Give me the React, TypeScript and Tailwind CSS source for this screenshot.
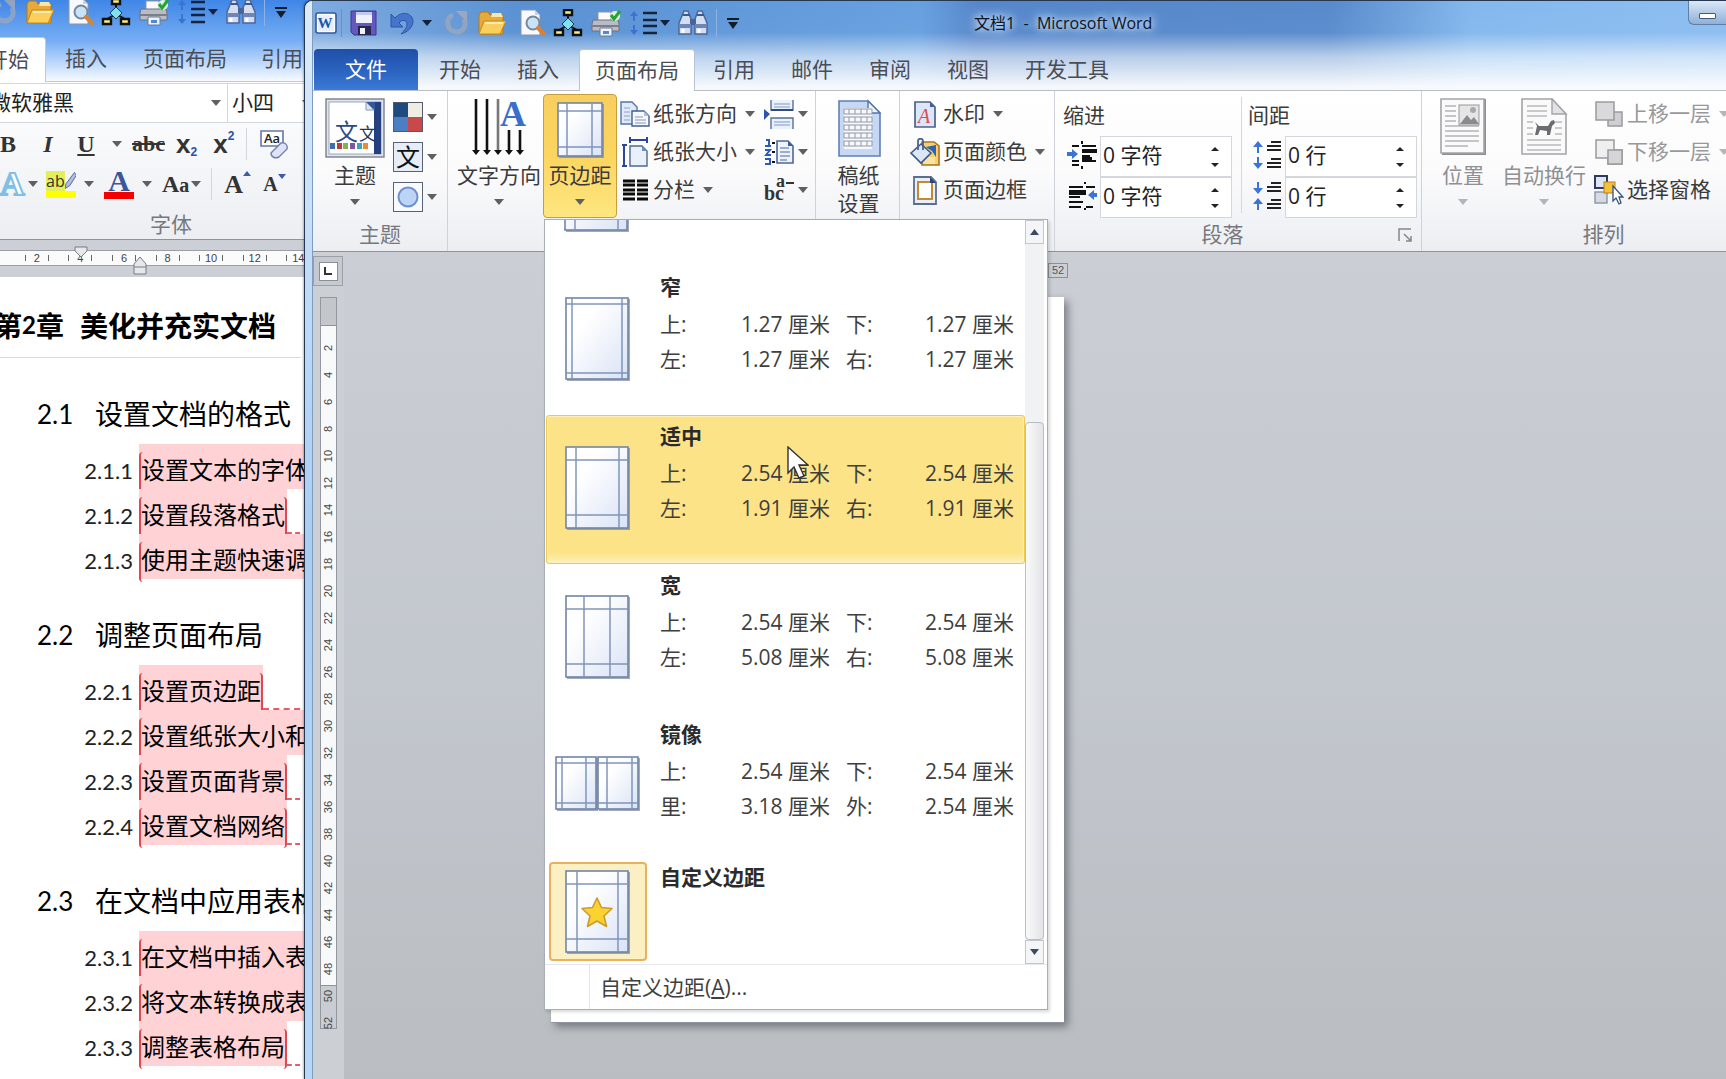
import type { ReactNode } from 'react';
import clsx from 'clsx';

/* ---------- data ---------- */

interface Outline {
  no: string;
  title: string;
  items: { no: string; text: string; open?: boolean }[];
}

const OUTLINE: Outline[] = [
  {
    no: '2.1',
    title: '设置文档的格式',
    items: [
      { no: '2.1.1', text: '设置文本的字体', open: true },
      { no: '2.1.2', text: '设置段落格式' },
      { no: '2.1.3', text: '使用主题快速调', open: true },
    ],
  },
  {
    no: '2.2',
    title: '调整页面布局',
    items: [
      { no: '2.2.1', text: '设置页边距' },
      { no: '2.2.2', text: '设置纸张大小和', open: true },
      { no: '2.2.3', text: '设置页面背景' },
      { no: '2.2.4', text: '设置文档网络' },
    ],
  },
  {
    no: '2.3',
    title: '在文档中应用表格',
    items: [
      { no: '2.3.1', text: '在文档中插入表', open: true },
      { no: '2.3.2', text: '将文本转换成表', open: true },
      { no: '2.3.3', text: '调整表格布局' },
    ],
  },
];

interface Preset {
  name: string;
  rows: [string, string, string, string][];
  // guide positions inside the 64x83 thumbnail
  x: [number, number];
  y: [number, number];
  mirrored?: boolean;
}

const PRESETS: Preset[] = [
  {
    name: '窄',
    rows: [['上:', '1.27', '下:', '1.27'], ['左:', '1.27', '右:', '1.27']],
    x: [7, 57],
    y: [7, 76],
  },
  {
    name: '适中',
    rows: [['上:', '2.54', '下:', '2.54'], ['左:', '1.91', '右:', '1.91']],
    x: [11, 54],
    y: [14, 69],
  },
  {
    name: '宽',
    rows: [['上:', '2.54', '下:', '2.54'], ['左:', '5.08', '右:', '5.08']],
    x: [19, 45],
    y: [14, 69],
  },
  {
    name: '镜像',
    rows: [['上:', '2.54', '下:', '2.54'], ['里:', '3.18', '外:', '2.54']],
    x: [7, 31],
    y: [7, 47],
    mirrored: true,
  },
];

const TABS = ['开始', '插入', '页面布局', '引用', '邮件', '审阅', '视图', '开发工具'];

/* ---------- small drawings ---------- */

function Arrow({ className = 'text-[#5f6062]' }: { className?: string }) {
  return (
    <svg width="10" height="6" viewBox="0 0 10 6" className={clsx('shrink-0', className)}>
      <path d="M0 0h10L5 6z" fill="currentColor" />
    </svg>
  );
}

function RedoIcon() {
  return (
    <svg width="26" height="26" viewBox="0 0 26 26" fill="none">
      <path d="M9 5C1 8 2 21 12 22c8 0 11-7 8-13" stroke="#a3a9b8" strokeWidth="5" />
      <path d="M12 1h11v11z" fill="#b3aeb4" />
    </svg>
  );
}

function UndoIcon() {
  return (
    <svg width="24" height="26" viewBox="0 0 24 26">
      <path d="M1 4v13h12L9 13c3-4 8-3 8 1 0 3-2 6-6 10 7-2 12-7 12-13C22 2 11 1 5 8z" fill="#4575cb" stroke="#2d57a6" />
    </svg>
  );
}

function SaveIcon() {
  return (
    <svg width="28" height="28" viewBox="0 0 28 28">
      <path d="M1 2h25v24H4l-3-3z" fill="#6258bd" stroke="#3e3788" />
      <path d="M6 3h16v11H6z" fill="#eef1fb" />
      <path d="M6 3h16v3H6z" fill="#c3cbea" />
      <path d="M8 17h13v9H8z" fill="#26264e" />
      <path d="M10 19h5v6h-5z" fill="#f1f1f6" />
    </svg>
  );
}

function FolderIcon() {
  return (
    <svg width="29" height="26" viewBox="0 0 29 26">
      <path d="M1 5l2-3h7l2 3h13v19H1z" fill="#e6a93a" stroke="#b87b10" />
      <path d="M14 3h9l2 4H13z" fill="#f9e6a8" />
      <path d="M1 24L6 11h22l-6 13z" fill="#fbcf5c" stroke="#c48a1c" />
      <path d="M7 13h18" stroke="#fdeab0" strokeWidth="2" />
    </svg>
  );
}

function PreviewIcon() {
  return (
    <svg width="28" height="28" viewBox="0 0 28 28">
      <path d="M2 1h14l5 5v20H2z" fill="#f7f9fd" stroke="#8a95ab" />
      <path d="M16 1v5h5z" fill="#c9d2e2" />
      <circle cx="14" cy="14" r="6.5" fill="#c8e4f4" stroke="#75879c" strokeWidth="2" />
      <path d="M19 19l6 6" stroke="#d98232" strokeWidth="4" strokeLinecap="round" />
    </svg>
  );
}

function DiagramIcon() {
  return (
    <svg width="30" height="28" viewBox="0 0 30 28">
      <path d="M15 6v6M15 16l-9 5M15 16l9 5M15 17v4" stroke="#111" strokeWidth="2" />
      <g fill="#f8f27c" stroke="#111" strokeWidth="2.4">
        <path d="M11 1h8v5h-8zM2 21h8v5H2zM20 21h8v5h-8z" />
      </g>
      <path d="M15 9l6 6-6 6-6-6z" fill="#7fe0ee" stroke="#1d3c53" />
    </svg>
  );
}

function PrinterIcon() {
  return (
    <svg width="30" height="28" viewBox="0 0 30 28">
      <path d="M7 3h13v9H7z" fill="#fbfbfd" stroke="#9094a0" />
      <path d="M2 11h25l1 4v7H1v-7z" fill="#b9bcc4" stroke="#6c7080" />
      <path d="M1 16h27v2H1z" fill="#7b7f8c" />
      <path d="M9 19h12v8H9z" fill="#eef4fd" stroke="#6d7a92" />
      <path d="M12 22h6v3h-6z" fill="#4b8ade" />
      <circle cx="24" cy="7" r="5" fill="#dff3d9" />
      <path d="M20 6l3 4 6-8" stroke="#24a336" strokeWidth="3" fill="none" />
    </svg>
  );
}

function SpacingIcon() {
  return (
    <svg width="29" height="26" viewBox="0 0 29 26">
      <path d="M14 3h14M14 10h14M14 16h14M14 23h14" stroke="#15233c" strokeWidth="2.4" />
      <path d="M5 1l4 5H6v5H4V6H1zM5 25l4-5H6v-5H4v5H1z" fill="#3b74d0" />
    </svg>
  );
}

function BinocularsIcon() {
  return (
    <svg width="30" height="26" viewBox="0 0 30 26">
      <path d="M6 1h4l3 8v15H1V13zM20 1h4l5 12v11H17V9z" fill="#d3def1" stroke="#4d6798" strokeWidth="1.5" />
      <path d="M12 9h6v6h-6z" fill="#4a6499" />
      <path d="M1 14h12v4H1zM17 14h12v4H17z" fill="#6d86b5" />
      <path d="M5 5h7M19 5h7" stroke="#3e588c" strokeWidth="2" />
      <path d="M5 19v4M21 19v4" stroke="#fff" strokeWidth="3" />
    </svg>
  );
}

function WordIcon() {
  return (
    <svg width="22" height="22" viewBox="0 0 22 22">
      <rect x="1" y="1" width="20" height="20" rx="2" fill="#fff" stroke="#315a9c" strokeWidth="1.6" />
      <path d="M3 3h12l4 4v12H3z" fill="#e6effb" />
      <text x="10" y="16" textAnchor="middle" fontSize="15" fontWeight="700" fill="#1f57a8" fontFamily="Liberation Serif, serif">
        W
      </text>
    </svg>
  );
}

function CustomizeIcon() {
  return (
    <svg width="12" height="11" viewBox="0 0 12 11">
      <path d="M0 0h12v2H0zM1 4h10L6 11z" fill="#131c2b" />
    </svg>
  );
}

function Sheet({ w, h, x, y, children }: { w: number; h: number; x: number[]; y: number[]; children?: ReactNode }) {
  return (
    <svg width={w + 3} height={h + 3} viewBox={`0 0 ${w + 3} ${h + 3}`} className="shrink-0">
      <defs>
        <linearGradient id="sheet" x1="0" y1="0" x2="1" y2="1">
          <stop offset="0.3" stopColor="#fff" />
          <stop offset="1" stopColor="#d9e2f5" />
        </linearGradient>
      </defs>
      <rect x="2" y="2" width={w} height={h} fill="#76849c" opacity="0.7" />
      <rect x="1" y="1" width={w - 1} height={h - 1} fill="url(#sheet)" stroke="#7285a6" strokeWidth="1.6" />
      {x.map((v) => (
        <path key={`x${v}`} d={`M${v} 1V${h}`} stroke="#7f95bb" strokeWidth="1.5" />
      ))}
      {y.map((v) => (
        <path key={`y${v}`} d={`M1 ${v}H${w}`} stroke="#7f95bb" strokeWidth="1.5" />
      ))}
      {children}
    </svg>
  );
}

function ThemeIcon() {
  return (
    <svg width="60" height="60" viewBox="0 0 60 60">
      <rect x="1" y="1" width="58" height="58" fill="#dfe4ee" stroke="#7b7f8a" strokeWidth="1.4" />
      <rect x="4" y="4" width="52" height="52" fill="#fff" stroke="#9ba5ba" />
      <path d="M49 4h7v52h-7z" fill="#24407f" />
      <path d="M41 4h9v9z" fill="#3559a0" />
      <path d="M41 4v8h8z" fill="#dce6f5" stroke="#8597b8" />
      <text x="10" y="42" fontSize="23" fill="#2a4a86" fontFamily="Noto Sans CJK SC, sans-serif">文</text>
      <text x="34" y="42" fontSize="17" fill="#1c3562" fontFamily="Noto Sans CJK SC, sans-serif">文</text>
      <path d="M5 45h5v6H5z" fill="#3b6fb0" />
      <path d="M12 45h5v6h-5z" fill="#c0393f" />
      <path d="M18 45h5v6h-5z" fill="#8bb045" />
      <path d="M25 45h5v6h-5z" fill="#7a5aa6" />
      <path d="M32 45h5v6h-5z" fill="#3aa5bd" />
      <path d="M38 45h5v6h-5z" fill="#ee8a35" />
    </svg>
  );
}

function ColorsIcon() {
  return (
    <svg width="30" height="30" viewBox="0 0 30 30">
      <path d="M0 0h30v30H0z" fill="#555b66" />
      <path d="M1 1h14v14H1z" fill="#1f4a80" />
      <path d="M15 1h14v14H15z" fill="#efede3" />
      <path d="M1 15h14v14H1z" fill="#4b7ec2" />
      <path d="M15 15h14v14H15z" fill="#c9484a" />
    </svg>
  );
}

function FontsIcon() {
  return (
    <svg width="30" height="30" viewBox="0 0 30 30">
      <rect x="0.5" y="0.5" width="29" height="29" fill="#e6edf7" stroke="#596273" />
      <text x="15" y="24" textAnchor="middle" fontSize="24" fill="#111" fontFamily="Noto Sans CJK SC, sans-serif">文</text>
    </svg>
  );
}

function EffectsIcon() {
  return (
    <svg width="30" height="30" viewBox="0 0 30 30">
      <rect x="0.5" y="0.5" width="29" height="29" fill="#f8fafd" stroke="#596273" />
      <circle cx="15" cy="15" r="9.5" fill="#bcd4f6" stroke="#6f90cc" strokeWidth="2" />
    </svg>
  );
}

function TextDirectionIcon() {
  return (
    <svg width="56" height="58" viewBox="0 0 56 58">
      <path d="M5 1v52M16 1v52M49 32v21M38 32v21" stroke="#111" strokeWidth="2.6" />
      <path d="M27 1v52" stroke="#777" strokeWidth="2.6" />
      <path d="M1 52h8l-4 5zM12 52h8l-4 5zM23 52h8l-4 5zM34 52h8l-4 5zM45 52h8l-4 5z" fill="#111" />
      <text x="42" y="28" textAnchor="middle" fontSize="36" fontWeight="700" fill="#3a6ecb" fontFamily="Liberation Serif, serif">A</text>
    </svg>
  );
}

function OrientationIcon() {
  return (
    <svg width="30" height="28" viewBox="0 0 30 28">
      <path d="M1 2h11l5 5v17H1z" fill="#dfe9f8" stroke="#5573a8" strokeWidth="1.4" />
      <path d="M4 8h6M4 12h6M4 16h6M4 20h6" stroke="#8ba2cb" />
      <path d="M12 11h12l5 5v10H12z" fill="#f5f8fd" stroke="#43608f" strokeWidth="1.4" />
      <path d="M24 11v5h5z" fill="#aebfdd" />
      <path d="M15 17h8M15 20h11M15 23h11" stroke="#8297bd" />
    </svg>
  );
}

function PaperSizeIcon() {
  return (
    <svg width="30" height="30" viewBox="0 0 30 30">
      <path d="M10 3h17M10 0v6M27 0v6M4 8v21M2 8h5M2 29h5" stroke="#2b4798" strokeWidth="2" />
      <path d="M10 9h12l5 5v15H10z" fill="#e9f0fa" stroke="#4c688f" strokeWidth="1.4" />
      <path d="M22 9v5h5z" fill="#6f8fc0" />
    </svg>
  );
}

function ColumnsIcon() {
  return (
    <svg width="28" height="22" viewBox="0 0 28 22">
      <path d="M2 2h12M2 6h12M2 11h12M2 15h12M2 20h12M16 2h11M16 6h11M16 11h11M16 15h11M16 20h11" stroke="#0b0b0b" strokeWidth="2.8" />
    </svg>
  );
}

function BreaksIcon() {
  return (
    <svg width="30" height="29" viewBox="0 0 30 29">
      <path d="M0 9l6 5-6 6z" fill="#2c55b0" />
      <path d="M7 0v10h22V0" fill="#eaf1fb" stroke="#53709e" strokeWidth="1.4" />
      <path d="M7 29V18h22v11" fill="#eaf1fb" stroke="#53709e" strokeWidth="1.4" />
      <path d="M10 4h16M10 7h16M10 22h16M10 25h16" stroke="#8098c4" />
      <path d="M7 10h22" stroke="#2d4b85" strokeWidth="2" />
    </svg>
  );
}

function LineNumbersIcon() {
  return (
    <svg width="30" height="27" viewBox="0 0 30 27">
      <path d="M2 1h3v6M1 7h6M1 11h5l-4 5h5M1 20h5v5H1" stroke="#2f5ab8" strokeWidth="2" fill="none" />
      <path d="M8 4h3M8 13h3M8 23h3" stroke="#111" strokeWidth="2" />
      <path d="M13 2h11l5 5v17H13z" fill="#eef3fb" stroke="#4c6896" strokeWidth="1.6" />
      <path d="M24 2v5h5z" fill="#3b5da0" />
      <path d="M16 9h9M16 13h10M16 17h10M16 21h7" stroke="#8297bd" strokeWidth="1.4" />
    </svg>
  );
}

function HyphenIcon() {
  return (
    <svg width="30" height="24" viewBox="0 0 30 24" fontFamily="Liberation Serif, serif" fontWeight="700" fill="#333">
      <text x="12" y="9" fontSize="18">a</text>
      <path d="M22 4h8v2h-8z" />
      <text x="0" y="22" fontSize="20">bc</text>
    </svg>
  );
}

function GridPaperIcon() {
  return (
    <svg width="44" height="58" viewBox="0 0 44 58">
      <path d="M2 2h29l12 12v43H2z" fill="#c6d8f3" stroke="#6080b4" strokeWidth="1.6" />
      <path d="M31 2v12h12z" fill="#f2f6fc" stroke="#5374ab" strokeWidth="1.4" />
      <rect x="7" y="9" width="28" height="41" fill="#f6f8fc" />
      {[10, 18, 26, 34, 42].map((y) => (
        <g key={y} fill="none" stroke="#9298a6">
          <path d={`M7 ${y}h28v5H7z`} />
          <path d={`M12 ${y}v5M18 ${y}v5M24 ${y}v5M30 ${y}v5`} />
        </g>
      ))}
    </svg>
  );
}

function WatermarkIcon() {
  return (
    <svg width="24" height="27" viewBox="0 0 24 27">
      <path d="M2 1h15l5 5v20H2z" fill="#dbe6f6" stroke="#4c628a" strokeWidth="1.7" />
      <path d="M17 1v5h5z" fill="#3f5f9a" />
      <text x="11" y="22" textAnchor="middle" fontSize="20" fill="#e04c55" fontFamily="Liberation Serif, serif" fontStyle="italic">A</text>
    </svg>
  );
}

function PageColorIcon() {
  return (
    <svg width="30" height="29" viewBox="0 0 30 29">
      <path d="M12 4h12l5 4v19H12z" fill="#f7cf70" stroke="#a8741d" strokeWidth="1.6" />
      <path d="M13 19h12v7H13z" fill="#f9e3a4" />
      <path d="M1 15l10-9 10 9-10 10z" fill="#dce7f6" stroke="#3d5a88" strokeWidth="1.6" />
      <path d="M8 12V3c0-3 5-3 5 0v9" fill="none" stroke="#4a648f" strokeWidth="1.8" />
      <path d="M16 9l10-2v12l-4-6z" fill="#2c62b8" />
    </svg>
  );
}

function PageBorderIcon() {
  return (
    <svg width="26" height="29" viewBox="0 0 26 29">
      <path d="M2 1h17l5 5v22H2z" fill="#e9effa" stroke="#5d6d8d" strokeWidth="1.8" />
      <path d="M6 6h14v17H6z" fill="#fff" stroke="#c28a35" strokeWidth="2" />
      <path d="M18 1v6h6z" fill="#2c4576" />
    </svg>
  );
}

function IndentIcon({ right = false }: { right?: boolean }) {
  return (
    <svg width="30" height="28" viewBox="0 0 30 28">
      {right ? (
        <>
          <path d="M2 5h14M19 5h9M2 15h11M2 20h14M2 25h12M19 25h7" stroke="#111" strokeWidth="2" />
          <path d="M2 8h17v5H2z" fill="#111" />
          <path d="M21 13l6-5v3h3v4h-3v3z" fill="#3b74d6" />
          <path d="M18 0v2M18 26v2" stroke="#111" strokeWidth="2" />
        </>
      ) : (
        <>
          <path d="M5 5h7M15 5h14M15 15h8M15 20h14M5 20h7M5 24h7" stroke="#111" strokeWidth="2" />
          <path d="M15 8h15v4H15zM15 16h10v3H15z" fill="#111" />
          <path d="M11 13L5 8v3H0v4h5v3z" fill="#3b74d6" />
          <path d="M15 0v3M15 25v3" stroke="#111" strokeWidth="2" />
        </>
      )}
    </svg>
  );
}

function ParaSpaceIcon({ after = false }: { after?: boolean }) {
  const up = 'M6 0l5 6H7v6H5V6H1z';
  const down = 'M6 12l5-6H7V0H5v6H1z';
  return (
    <svg width="30" height="30" viewBox="0 0 30 30">
      <path d={after ? down : up} fill="#3b74d6" transform="translate(0 1)" />
      <path d={after ? up : down} fill="#3b74d6" transform="translate(0 17)" />
      <path d="M19 2h10M15 6h14M15 10h14M19 19h10M15 23h14M15 27h14" stroke="#222" strokeWidth="2" />
    </svg>
  );
}

function PositionIcon() {
  return (
    <svg width="47" height="58" viewBox="0 0 47 58">
      <path d="M2 1h44v56H2z" fill="#8f8f93" />
      <path d="M1 1h43v54H1z" fill="#fafafa" stroke="#a4a4a8" strokeWidth="1.6" />
      <path d="M5 8h11M5 13h11M5 18h11M5 23h11M5 28h34M5 33h34M5 38h34M5 43h34M5 48h23" stroke="#b4b4b8" strokeWidth="1.4" />
      <rect x="19" y="7" width="20" height="20" fill="#e5e5e6" stroke="#98989c" />
      <path d="M20 26l7-9 4 5 3-3 5 7z" fill="#8b8b8f" />
      <circle cx="33" cy="12" r="3" fill="#a9a9ad" />
    </svg>
  );
}

function WrapIcon() {
  return (
    <svg width="47" height="58" viewBox="0 0 47 58">
      <path d="M1 1h30l14 15v40H1z" fill="#fafafa" stroke="#a4a4a8" strokeWidth="1.6" />
      <path d="M31 1v15h14z" fill="#e2e2e4" stroke="#a4a4a8" strokeWidth="1.4" />
      <path d="M6 8h20M6 13h20M6 18h20M6 24h6M6 30h6M6 36h6M34 24h7M34 30h7M34 36h7M6 42h34M6 47h34M6 52h34" stroke="#b9b9bd" strokeWidth="1.4" />
      <path d="M14 24l4 4h9l3-5 3-1 1 3-3 3-2 9h-3v-4l-7-1-2 5h-3l2-9z" fill="#6c6c70" />
    </svg>
  );
}

function LayersIcon({ back = false }: { back?: boolean }) {
  return (
    <svg width="28" height="26" viewBox="0 0 28 26" stroke="#9a9a9f" strokeWidth="1.5">
      <rect x="13" y="11" width="14" height="14" fill={back ? '#e3e3e5' : '#cfcfd2'} />
      <rect x="1" y="1" width="18" height="18" fill={back ? '#efeff0' : '#d9d9dc'} />
      {back && <rect x="13" y="11" width="14" height="14" fill="#d5d5d8" />}
    </svg>
  );
}

function SelectionIcon() {
  return (
    <svg width="30" height="30" viewBox="0 0 30 30">
      <rect x="1" y="1" width="12" height="12" fill="#dfe6f2" stroke="#2d3c5e" strokeWidth="2" />
      <rect x="1" y="17" width="12" height="11" fill="#d5dae4" stroke="#8b93a3" strokeWidth="1.4" />
      <rect x="10" y="7" width="11" height="11" fill="#f5c03c" stroke="#b98413" />
      <path d="M19 11v15l3-3 3 6 2-1-2-6h4z" fill="#fff" stroke="#33527e" strokeWidth="1.3" />
    </svg>
  );
}

function ClearFormatIcon() {
  return (
    <svg width="32" height="30" viewBox="0 0 32 30">
      <path d="M2 2h22v15H2z" fill="#fff" stroke="#6676a6" strokeWidth="1.6" />
      <text x="5" y="14" fontSize="13" fontWeight="600" fontFamily="Open Sans, sans-serif" fill="#222">Aa</text>
      <path d="M12 24l10-10c4-1 7 2 6 6l-8 8c-4 2-8 0-8-4z" fill="#dfe3f4" stroke="#7380ae" strokeWidth="1.4" />
    </svg>
  );
}

function MousePointer() {
  return (
    <svg width="22" height="34" viewBox="0 0 22 34">
      <path d="M1 1v26l6-6 5 11 5-2-5-11h9z" fill="#fff" stroke="#333" strokeWidth="1.4" />
    </svg>
  );
}

/* ---------- shared pieces ---------- */

function QuickAccess({ full = false }: { full?: boolean }) {
  return (
    <div className="flex shrink-0 items-center">
      {full && (
        <>
          <button aria-label="Word"><WordIcon /></button>
          <span className="ml-1 h-7 w-px bg-[#6b8fbf]" />
          <button aria-label="保存" className="ml-2"><SaveIcon /></button>
          <button aria-label="撤消" className="ml-3"><UndoIcon /></button>
          <button aria-label="撤消列表" className="ml-2"><Arrow className="text-[#14213a]" /></button>
        </>
      )}
      <button aria-label="恢复" className={clsx('opacity-70', full && 'ml-3')}><RedoIcon /></button>
      <button aria-label="打开" className="ml-2"><FolderIcon /></button>
      <button aria-label="打印预览" className="ml-3"><PreviewIcon /></button>
      <button aria-label="图示" className="ml-1.5"><DiagramIcon /></button>
      <button aria-label="快速打印" className="ml-2"><PrinterIcon /></button>
      <button aria-label="行距" className="ml-2 flex items-center gap-0.5">
        <SpacingIcon />
        <Arrow className="text-[#14213a]" />
      </button>
      <button aria-label="查找" className="ml-2"><BinocularsIcon /></button>
      <span className="ml-2 h-7 w-px bg-[#8fb2e2]" />
      <button aria-label="自定义快速访问工具栏" className="ml-2.5"><CustomizeIcon /></button>
    </div>
  );
}

function SmallButton({ icon, label, arrow, disabled }: { icon: ReactNode; label?: string; arrow?: boolean; disabled?: boolean }) {
  return (
    <button className={clsx('flex h-[38px] items-center', disabled ? 'text-[#97989c]' : 'text-[#3b3b3b]')} disabled={disabled} aria-label={label ?? '更多'}>
      <span className="flex w-[30px] shrink-0 justify-center">{icon}</span>
      {label && <span className="ml-[3px]">{label}</span>}
      {arrow && <span className={label ? 'ml-2' : 'ml-1'}><Arrow className={disabled ? 'text-[#b5b5b9]' : undefined} /></span>}
    </button>
  );
}

function BigButton({ icon, label, className, disabled }: { icon: ReactNode; label: string; className?: string; disabled?: boolean }) {
  return (
    <button disabled={disabled} className={clsx('flex flex-col items-center', disabled ? 'text-[#8f9094]' : 'text-[#3b3b3b]', className)}>
      <span className="flex h-[60px] items-start">{icon}</span>
      <span className="h-9 leading-[34px]">{label}</span>
      <span className="flex h-4 items-center"><Arrow className={disabled ? 'text-[#b5b5b9]' : undefined} /></span>
    </button>
  );
}

function Group({ label, className, children, launcher }: { label?: string; className: string; children: ReactNode; launcher?: boolean }) {
  return (
    <section className={clsx('flex shrink-0 flex-col border-r border-[#cfd2d8]', className)}>
      <div className="flex h-[128px]">{children}</div>
      <div className="flex h-8 items-center justify-center text-[#77787d]">
        {launcher && <span className="ml-auto" />}
        <span className={clsx(launcher && 'pr-2')}>{label}</span>
        {launcher && (
          <button aria-label="段落设置" className="mr-2 ml-auto">
            <svg width="15" height="15" viewBox="0 0 15 15" fill="none" stroke="#85868b" strokeWidth="1.5">
              <path d="M1 13V1h12M6 6l7 7M13 8v5H8" />
            </svg>
          </button>
        )}
      </div>
    </section>
  );
}

function Spinner({ id, icon, label, value }: { id: string; icon: ReactNode; label: string; value: string }) {
  return (
    <div className="flex h-[41px] items-center">
      <label htmlFor={id} aria-label={label} className="flex w-[37px] justify-center pb-1">{icon}</label>
      <div className="flex h-full w-[132px] items-center border border-[#d3d6dc] bg-white">
        <input id={id} defaultValue={value} className="h-full w-[110px] min-w-0 bg-transparent pb-1.5 pl-0.5 text-[#222] outline-none" />
        <div className="flex flex-col gap-3">
          <button aria-label="增加">
            <svg width="8" height="4" viewBox="0 0 8 4" className="block"><path d="M0 4h8L4 0z" fill="#222" /></svg>
          </button>
          <button aria-label="减少">
            <svg width="8" height="4" viewBox="0 0 8 4" className="block"><path d="M0 0h8L4 4z" fill="#222" /></svg>
          </button>
        </div>
      </div>
    </div>
  );
}

/* ---------- document window at the back ---------- */

function FormatRow() {
  return (
    <div className="text-[#333]">
      <div className="flex h-10 items-center">
        <button className="flex h-full w-[228px] shrink-0 items-center justify-between border-y border-r border-[#d3d6dc] bg-white pr-1.5">
          <span className="-ml-2.5 text-[#222]">微软雅黑</span>
          <Arrow />
        </button>
        <button className="flex h-full w-[84px] shrink-0 items-center justify-between border-y border-[#d3d6dc] bg-white pl-1">
          <span className="text-[#222]">小四</span>
          <Arrow />
        </button>
      </div>
      <div className="flex h-[41px] items-center font-['Liberation_Serif',serif] text-[24px]">
        <button className="w-4 font-bold">B</button>
        <button className="ml-6 w-4 italic font-bold">I</button>
        <button className="ml-5 w-5 font-bold underline">U</button>
        <span className="ml-4"><Arrow /></span>
        <button className="ml-2.5 w-8 text-[22px] font-bold line-through">abc</button>
        <button className="ml-3 flex items-end font-bold font-['Liberation_Sans',sans-serif] text-[26px] leading-7">
          x<span className="text-[12px] leading-3 text-[#2c50a8]">2</span>
        </button>
        <button className="ml-4 flex items-start font-bold font-['Liberation_Sans',sans-serif] text-[26px] leading-7">
          x<span className="text-[12px] leading-3 text-[#2c50a8]">2</span>
        </button>
        <span className="ml-3 h-8 w-px bg-[#d3d6dc]" />
        <button aria-label="清除格式" className="ml-3"><ClearFormatIcon /></button>
      </div>
      <div className="flex h-10 items-center font-['Liberation_Serif',serif]">
        <button className="w-[22px] text-[34px] leading-8 font-bold text-white [-webkit-text-stroke:2px_#7fbfe6]">A</button>
        <span className="ml-1.5"><Arrow /></span>
        <button className="ml-2 flex w-[30px] shrink-0 flex-col font-['Open_Sans',sans-serif] text-[16px] leading-5">
          <span className="flex w-full items-center">
            <span className="bg-[#e4ef57]">ab</span>
            <svg width="12" height="20" viewBox="0 0 12 20"><path d="M10 1L1 13l-1 5 5-3 7-11z" fill="#aebde0" stroke="#54659a" /></svg>
          </span>
          <span className="h-[7px] w-full bg-[#ffff00]" />
        </button>
        <span className="ml-2"><Arrow /></span>
        <button className="ml-2.5 flex w-[30px] shrink-0 flex-col items-center text-[30px] leading-[22px] font-bold text-[#3a569c]">
          A
          <span className="h-[7px] w-full bg-[#f50000]" />
        </button>
        <span className="ml-2"><Arrow /></span>
        <button className="ml-2.5 text-[24px] font-bold">A<span className="text-[20px]">a</span></button>
        <span className="ml-0.5"><Arrow /></span>
        <span className="ml-2.5 h-8 w-px bg-[#d3d6dc]" />
        <button className="ml-3 flex text-[26px] font-bold">
          A
          <svg width="8" height="5" viewBox="0 0 8 5" className="mt-1.5"><path d="M0 5h8L4 0z" fill="#3a5ba6" /></svg>
        </button>
        <button className="ml-3 flex items-end text-[20px] font-bold">
          A
          <svg width="8" height="5" viewBox="0 0 8 5" className="mb-5"><path d="M0 0h8L4 5z" fill="#3a5ba6" /></svg>
        </button>
      </div>
    </div>
  );
}

function HorizontalRuler() {
  return (
    <div className="relative h-[37px] shrink-0 bg-[#ccd0d6] pt-2.5">
      <div className="h-4 border-y border-[#9a9ea6] bg-[#fbfbfc]">
        <div className="ml-[15px] flex h-full w-[305px] items-center font-['Liberation_Sans',sans-serif] text-[11px] text-[#444]">
          {[2, 4, 6, 8, 10, 12, 14].map((n) => (
            <span key={n} className="flex flex-1 items-center justify-center">
              <i className="h-1.5 w-px bg-[#666]" />
              <span className="w-[22px] text-center">{n}</span>
              <i className="h-1.5 w-px bg-[#666]" />
            </span>
          ))}
        </div>
      </div>
      {/* indent markers */}
      <svg width="14" height="12" viewBox="0 0 14 12" className="absolute top-1.5 left-[74px]">
        <path d="M1 1h12v4l-6 6-6-6z" fill="#e6e8ec" stroke="#777b84" />
      </svg>
      <svg width="14" height="19" viewBox="0 0 14 19" className="absolute top-4 left-[133px]">
        <path d="M1 8l6-7 6 7v10H1zM1 11h12" fill="#e6e8ec" stroke="#777b84" />
      </svg>
    </div>
  );
}

function OutlineItem({ no, text, open, last }: { no: string; text: string; open?: boolean; last: boolean }) {
  return (
    <li className="flex h-[45px]">
      <span className="w-[139px] shrink-0 pt-2 pr-1.5 text-right leading-[38px] text-[#222] font-['Lato','Noto_Sans_CJK_SC',sans-serif] text-[22px]">
        {no}
      </span>
      <span className={clsx('shrink-0 bg-[#ffd3d6] pt-2', open && 'w-[165px]')}>
        <span
          className={clsx(
            'block border-l-2 border-[#e0474f] leading-[35px] whitespace-nowrap',
            last ? 'h-10 rounded-l-sm' : 'h-[37px] rounded-tl-sm',
            !open && 'border-r-2',
            !open && (last ? 'rounded-r-sm' : 'rounded-tr-sm'),
          )}
        >
          {text}
        </span>
      </span>
      {!open && <span className="mr-1 flex-1 border-b-2 border-dashed border-[#e0606a]" />}
    </li>
  );
}

function BackWindow() {
  return (
    <div className="flex w-[304px] shrink-0 flex-col overflow-hidden bg-white">
      <header className="flex h-[82px] shrink-0 flex-col bg-linear-to-b from-[#3f86e6] via-[#76aef4] to-[#fafcff]">
        <div className="-ml-2 flex h-6 items-center"><QuickAccess /></div>
        <nav className="mt-auto flex h-[45px] items-stretch border-b border-[#c3c8d2] whitespace-nowrap text-[#4a4d55]">
          <button className="-mb-px flex w-[46px] shrink-0 items-center justify-end rounded-tr border-t border-r border-[#c3c8d2] bg-white pr-4">
            <span>开始</span>
          </button>
          <button className="ml-px px-[18px]">插入</button>
          <button className="px-[18px]">页面布局</button>
          <button className="px-4">引用</button>
        </nav>
      </header>
      <section className="flex h-[158px] shrink-0 flex-col border-b border-[#8e9299] bg-linear-to-b from-white to-[#eceef2] pt-px">
        <FormatRow />
        <p className="mt-1 ml-[150px] leading-8 text-[#77787d]">字体</p>
      </section>
      <HorizontalRuler />
      <article className="flex-1 overflow-hidden whitespace-nowrap text-black">
        <h1 className="-ml-1.5 mr-[3px] flex h-[81px] items-center border-b border-[#dcdcdc] pt-4 text-[28px] font-bold">
          <span className="font-['Noto_Sans_CJK_SC',sans-serif]">第</span>
          <span className="font-['Lato',sans-serif] text-[24px]">2</span>
          <span className="font-['Noto_Sans_CJK_SC',sans-serif]">章</span>
          <span className="ml-4 font-['Noto_Sans_CJK_SC',sans-serif]">美化并充实文档</span>
        </h1>
        <div className="pt-7">
          {OUTLINE.map((section) => (
            <section key={section.no} className="mb-7">
              <h2 className="flex h-[58px] items-center pb-0.5 text-[28px]">
                <span className="w-[95px] shrink-0 pl-[37px] font-['Lato',sans-serif] text-[26px]">{section.no}</span>
                {section.title}
              </h2>
              <ul className="text-[24px]">
                {section.items.map((item, i) => (
                  <OutlineItem key={item.no} {...item} last={i === section.items.length - 1} />
                ))}
              </ul>
            </section>
          ))}
        </div>
      </article>
    </div>
  );
}

/* ---------- margins menu ---------- */

function PresetThumb({ x, y, mirrored }: Preset) {
  if (!mirrored) return <Sheet w={63} h={82} x={x} y={y} />;
  return (
    <span className="flex pt-3">
      <Sheet w={41} h={53} x={x} y={y} />
      <span className="-ml-0.5"><Sheet w={41} h={53} x={[10, 35]} y={y} /></span>
    </span>
  );
}

function PresetItem({ preset, active }: { preset: Preset; active: boolean }) {
  return (
    <button
      role="menuitem"
      className={clsx(
        'relative flex h-[149px] w-full rounded-[3px] border text-left',
        active
          ? 'border-[#ecc94f] bg-[#fce387] shadow-[inset_0_0_0_1px_#fdf0bd,inset_0_-8px_8px_-4px_#fdf3c8]'
          : 'border-transparent',
      )}
    >
      <span className="flex w-[98px] shrink-0 justify-center pt-[30px] pl-1">
        <PresetThumb {...preset} />
      </span>
      <span className="ml-[15px] block flex-1">
        <span className="block h-10 pt-1 font-bold leading-8 text-[#2b2b2b]">{preset.name}</span>
        {preset.rows.map(([a, av, b, bv]) => (
          <span key={a} className="grid h-[35px] grid-cols-[48px_122px_56px_128px] leading-[34px]">
            <span>{a}</span>
            <span className="text-right">{av} 厘米</span>
            <span className="pl-4">{b}</span>
            <span className="text-right">{bv} 厘米</span>
          </span>
        ))}
      </span>
      {active && (
        <span className="absolute top-[30px] left-60"><MousePointer /></span>
      )}
    </button>
  );
}

function MarginsMenu() {
  return (
    <div
      role="menu"
      className="absolute top-full left-px z-20 mt-px w-[504px] border border-[#a9adb6] bg-white text-[#3f3f3f] shadow-[2px_2px_3px_rgba(0,0,0,0.15)]"
    >
      <div className="flex h-[745px] border-b border-[#e6e7ea]">
        <div className="w-[480px] pl-px">
          <div className="flex h-[46px] items-start">
            <div className="ml-[18px] flex h-[13px] items-end overflow-hidden">
              <Sheet w={63} h={82} x={[11, 54]} y={[14, 69]} />
            </div>
          </div>
          {PRESETS.map((preset) => (
            <PresetItem key={preset.name} preset={preset} active={preset.name === '适中'} />
          ))}
          <button role="menuitem" className="flex w-full text-left">
            <span className="ml-[3px] flex h-[99px] w-[98px] justify-center rounded border-2 border-[#eab05c] bg-[#fbf0c4] pt-1.5 pr-px">
              <Sheet w={63} h={82} x={[12, 53]} y={[14, 69]}>
                <path
                  d="M32 28l4.500 9.500 10.500 1-8 7.500 2.500 10.500-9.500-5.500-9.500 5.500 2.500-10.500-8-7.500 10.500-1z"
                  fill="#fbd22f"
                  stroke="#cf9a2c"
                  strokeWidth="1.6"
                  strokeLinejoin="round"
                />
              </Sheet>
            </span>
            <span className="ml-[13px] font-bold leading-[30px] text-[#2b2b2b]">自定义边距</span>
          </button>
        </div>
        <div className="flex w-[19px] flex-col bg-[#f1f2f4]">
          <button aria-label="向上滚动" className="flex h-6 items-center justify-center border border-[#c3c6cc] bg-[#f4f5f7]">
            <svg width="9" height="6" viewBox="0 0 9 6"><path d="M0 6h9L4.500 0z" fill="#3f4a66" /></svg>
          </button>
          <div className="h-[178px]" />
          <div className="flex-1 rounded-sm border border-[#b9bcc2] bg-linear-to-r from-[#fafafa] to-[#e3e4e7]" />
          <button aria-label="向下滚动" className="flex h-6 items-center justify-center border border-[#c3c6cc] bg-[#f4f5f7]">
            <svg width="9" height="6" viewBox="0 0 9 6"><path d="M0 0h9L4.500 6z" fill="#3f4a66" /></svg>
          </button>
        </div>
      </div>
      <button role="menuitem" className="flex h-11 w-full items-center pl-11">
        <span className="h-full w-px bg-[#e4e6ea]" />
        <span className="ml-2.5 pt-0.5">
          自定义边距(<u>A</u>)...
        </span>
      </button>
    </div>
  );
}

/* ---------- front window ---------- */

function Ribbon() {
  return (
    <div className="flex h-[161px] shrink-0 border-b border-[#8e9299] bg-linear-to-b from-white via-[#fbfbfc] to-[#eceef2] whitespace-nowrap">
      <Group label="主题" className="w-[135px]">
        <BigButton icon={<ThemeIcon />} label="主题" className="mt-[7px] ml-3 w-[60px]" />
        <div className="mt-[11px] ml-2 flex flex-col gap-2.5">
          {[<ColorsIcon key="c" />, <FontsIcon key="f" />, <EffectsIcon key="e" />].map((icon, i) => (
            <button key={i} aria-label={['颜色', '字体', '效果'][i]} className="flex items-center gap-1">
              {icon}
              <Arrow />
            </button>
          ))}
        </div>
      </Group>
      <Group className="w-[368px]">
        <BigButton icon={<TextDirectionIcon />} label="文字方向" className="mt-[7px] ml-[7px] w-[88px]" />
        <div className="relative h-[127px] w-[74px] pt-[3px]">
          <BigButton
            icon={<span className="pt-1 pl-0.5"><Sheet w={45} h={54} x={[10, 35]} y={[9, 45]} /></span>}
            label="页边距"
            className="h-[124px] w-full rounded border border-[#c79e3c] bg-linear-to-b from-[#f8cf5e] via-[#fbd560] to-[#fee680] pt-[3px]"
          />
          <MarginsMenu />
        </div>
        <div className="mt-1 ml-[3px] w-36">
          <SmallButton icon={<OrientationIcon />} label="纸张方向" arrow />
          <SmallButton icon={<PaperSizeIcon />} label="纸张大小" arrow />
          <SmallButton icon={<ColumnsIcon />} label="分栏" arrow />
        </div>
        <div className="mt-1">
          <SmallButton icon={<BreaksIcon />} arrow />
          <SmallButton icon={<LineNumbersIcon />} arrow />
          <SmallButton icon={<HyphenIcon />} arrow />
        </div>
      </Group>
      <Group className="w-[84px]">
        <button className="mt-2 flex w-full flex-col items-center pl-0.5 text-[#3b3b3b]">
          <span className="h-[62px]"><GridPaperIcon /></span>
          <span className="leading-7">稿纸<br />设置</span>
        </button>
      </Group>
      <Group className="w-[155px]">
        <div className="mt-1 ml-2.5">
          <SmallButton icon={<WatermarkIcon />} label="水印" arrow />
          <SmallButton icon={<PageColorIcon />} label="页面颜色" arrow />
          <SmallButton icon={<PageBorderIcon />} label="页面边框" />
        </div>
      </Group>
      <Group label="段落" className="w-[367px]" launcher>
        <div className="ml-2 w-[178px] text-[#3b3b3b]">
          <p className="h-[45px] leading-[49px]">缩进</p>
          <Spinner id="indent-left" icon={<IndentIcon />} label="左缩进" value="0 字符" />
          <Spinner id="indent-right" icon={<IndentIcon right />} label="右缩进" value="0 字符" />
        </div>
        <span className="mt-1.5 h-[116px] w-px bg-[#d5d8de]" />
        <div className="ml-1.5 text-[#3b3b3b]">
          <p className="h-[45px] leading-[49px]">间距</p>
          <Spinner id="space-before" icon={<ParaSpaceIcon />} label="段前间距" value="0 行" />
          <Spinner id="space-after" icon={<ParaSpaceIcon after />} label="段后间距" value="0 行" />
        </div>
      </Group>
      <Group label="排列" className="w-[364px]">
        <BigButton disabled icon={<PositionIcon />} label="位置" className="mt-[7px] ml-2.5 w-[62px]" />
        <BigButton disabled icon={<WrapIcon />} label="自动换行" className="mt-[7px] ml-1.5 w-[88px]" />
        <div className="mt-1 ml-1.5">
          <SmallButton disabled icon={<LayersIcon />} label="上移一层" arrow />
          <SmallButton disabled icon={<LayersIcon back />} label="下移一层" arrow />
          <SmallButton icon={<SelectionIcon />} label="选择窗格" />
        </div>
      </Group>
    </div>
  );
}

function Workspace() {
  const marks = Array.from({ length: 26 }, (_, i) => (i + 1) * 2);
  return (
    <div className="flex flex-1 overflow-hidden bg-linear-to-b from-[#cbced4] via-[#c3c7ce] to-[#babec2]">
      <div className="w-[31px] shrink-0 bg-[#ccd0d5] pt-1">
        <button aria-label="制表符" className="flex size-[30px] items-center justify-center border border-[#9b9fa7] bg-[#c6cad0]">
          <span className="flex size-[19px] items-center justify-center border border-[#8a8e96] bg-white">
            <i className="size-2 border-b-2 border-l-2 border-[#333]" />
          </span>
        </button>
        <div className="mt-[11px] ml-[7px] flex h-[732px] w-[17px] flex-col border border-[#93979f] bg-[linear-gradient(to_bottom,#c3c7cc_0,#c3c7cc_27px,#8e9299_27px,#8e9299_28px,#f8f9fb_28px,#f8f9fb_687px,#8e9299_687px,#8e9299_688px,#c9cdd3_688px)] pt-9 font-['Liberation_Sans',sans-serif] text-[11px] text-[#444]">
          {marks.map((n) => (
            <span key={n} className="flex h-[27px] shrink-0 items-center justify-center">
              <span className="-rotate-90 leading-3">{n}</span>
            </span>
          ))}
        </div>
      </div>
      <div className="flex-1 overflow-hidden">
        <div className="flex h-[45px] items-start pt-[11px]">
          <span className="ml-[704px] border border-[#8b8f97] bg-[#ccd0d6] px-[3px] leading-[13px] font-['Liberation_Sans',sans-serif] text-[11px] text-[#555]">
            52
          </span>
        </div>
        <div className="ml-[207px] h-[726px] w-[513px] border-b border-[#8f92a0] bg-white shadow-[4px_4px_8px_rgba(60,64,72,0.55)]" />
      </div>
    </div>
  );
}

function FrontWindow() {
  return (
    <div className="z-10 flex min-w-0 flex-1 rounded-tl-lg border-t border-l border-[#26384f] bg-[#b5d5f5] shadow-[-1px_0_2px_rgba(0,0,0,0.25)]">
      <div className="w-2 shrink-0 rounded-tl-lg border-r border-[#7d9cc0] bg-linear-to-b from-[#dcebfa] via-[#a9cdf3] to-[#b9d8f6]" />
      <div className="flex min-w-0 flex-1 flex-col">
        <header className="flex h-[90px] shrink-0 flex-col bg-[linear-gradient(to_bottom,rgba(255,255,255,0.05)_0%,rgba(255,255,255,0.08)_35%,rgba(255,255,255,0.6)_62%,rgba(255,255,255,0.94)_95%),linear-gradient(to_right,#77a6de_0%,#4f8ad0_15%,#5f9bde_43%,#4c80c8_47%,#4f84c9_72%,#7db4ec_82%,#86baf0_100%)]">
          <div className="flex h-12 items-start">
            <div className="ml-0.5 flex h-11 items-center"><QuickAccess full /></div>
            <h1 className="ml-[235px] leading-[45px] whitespace-pre text-[16px] text-[#0c1524] [text-shadow:0_0_6px_#cfe2f8,0_0_10px_#cfe2f8,0_0_14px_#bcd6f4]">
              {'文档1  -  Microsoft Word'}
            </h1>
            <button
              aria-label="最小化"
              className="ml-auto flex h-6 w-[38px] items-end justify-center rounded-bl-md border-b border-l border-[#5f7da6] bg-linear-to-b from-[#dbe8f6] to-[#8fb0d8] pb-[5px]"
            >
              <i className="h-[6px] w-[17px] rounded-[1px] border border-[#44597a] bg-white" />
            </button>
          </div>
          <nav className="flex flex-1 items-stretch border-b border-[#b8bdc6] whitespace-nowrap text-[#4a4d55]">
            <button className="ml-px w-[104px] rounded-t bg-linear-to-b from-[#1f4fa8] via-[#2a62bf] to-[#3b7ad6] text-white">文件</button>
            <span className="w-[3px]" />
            {TABS.map((tab) => (
              <button
                key={tab}
                className={tab === '页面布局' ? '-mb-px ml-0.5 rounded-t border-x border-t border-[#b8c4d6] bg-white px-[15px]' : 'px-[18px]'}
              >
                {tab}
              </button>
            ))}
          </nav>
        </header>
        <Ribbon />
        <Workspace />
      </div>
    </div>
  );
}

export default function App() {
  return (
    <main className="flex h-screen overflow-hidden bg-[#3f86e6] font-['Open_Sans','Noto_Sans_CJK_SC',sans-serif] text-[21px]">
      <BackWindow />
      <FrontWindow />
    </main>
  );
}
